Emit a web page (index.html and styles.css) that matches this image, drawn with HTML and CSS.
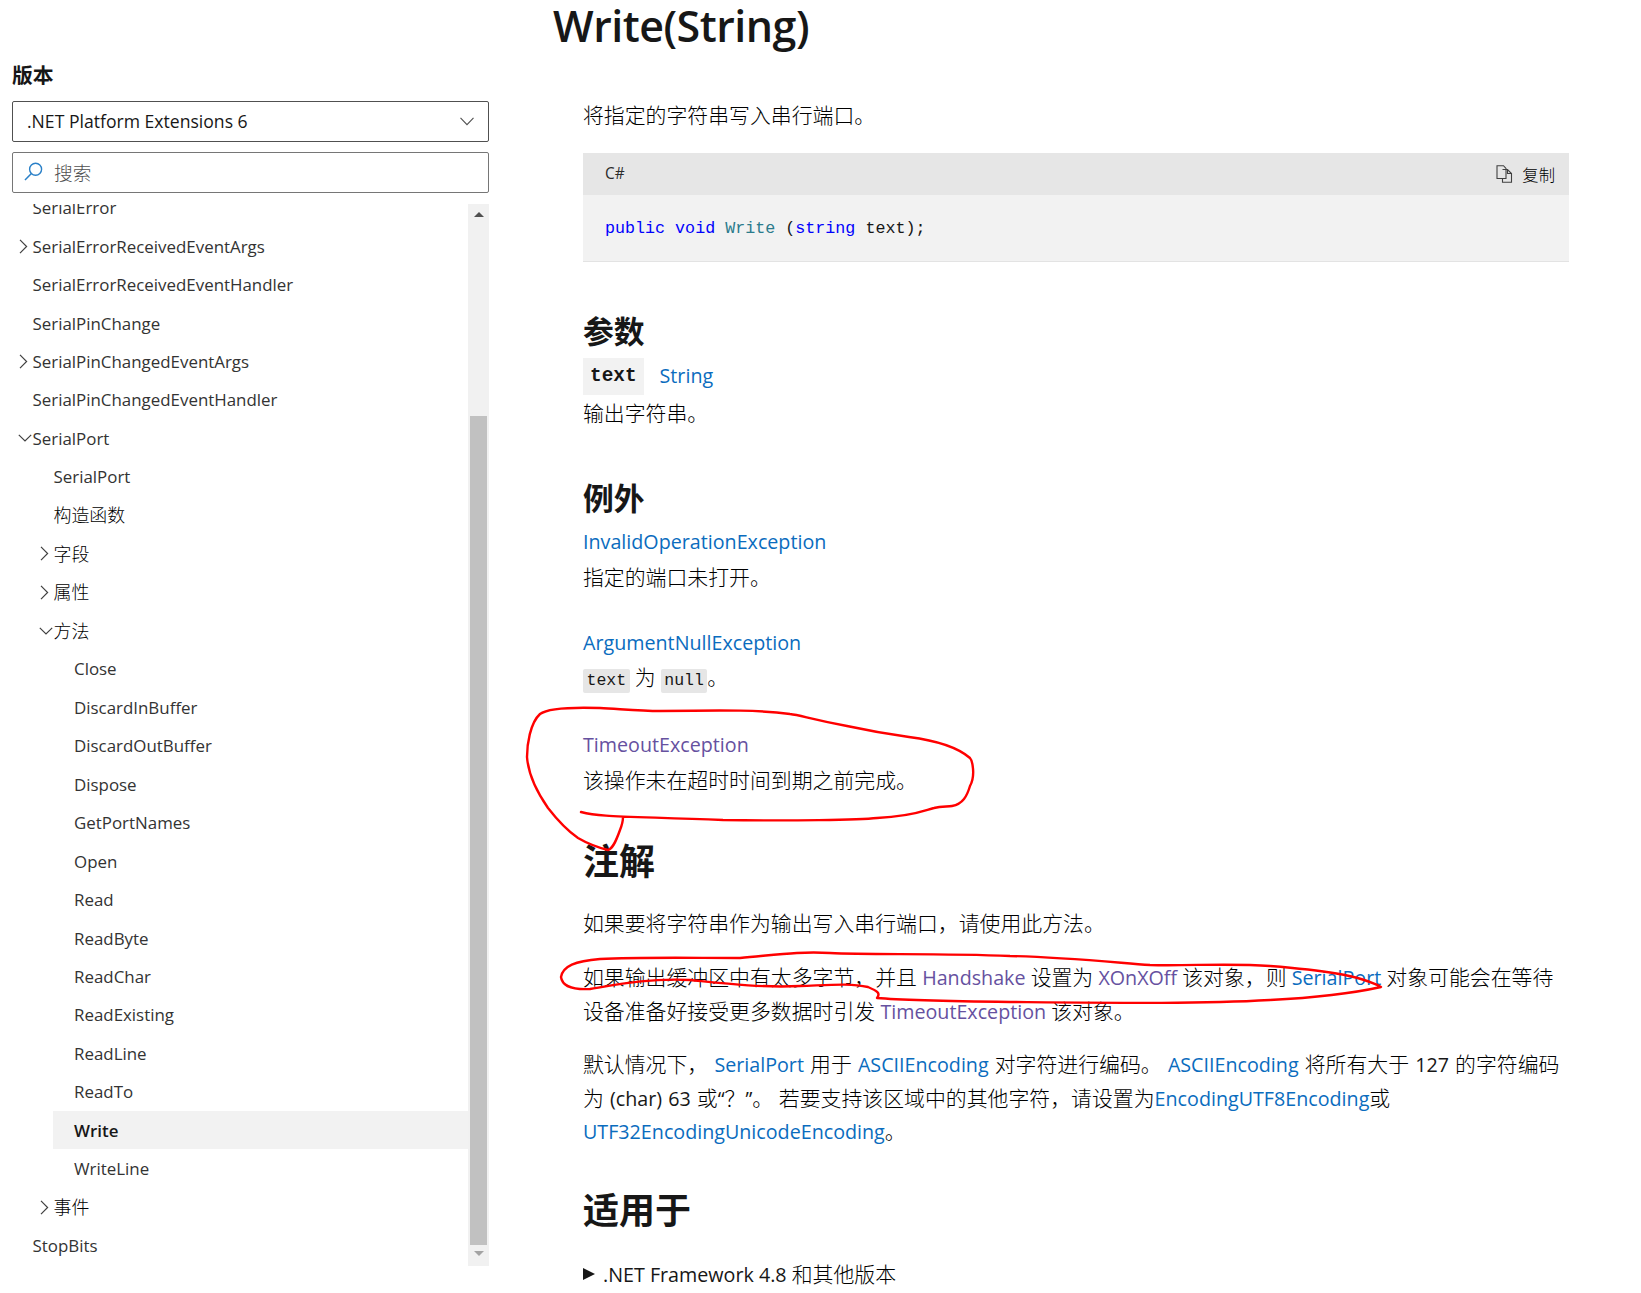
FILE: index.html
```html
<!DOCTYPE html>
<html lang="zh-CN">
<head>
<meta charset="utf-8">
<title>Write(String)</title>
<link rel="stylesheet" href="styles.css">
</head>
<body>
<div class="page">
  <aside class="side">
    <div class="side-label">版本</div>
    <div class="select">
      <span>.NET Platform Extensions 6</span>
      <svg class="select-chev" width="14" height="9" viewBox="0 0 14 9"><path d="M0.5 0.8 L7 7.6 L13.5 0.8" fill="none" stroke="#505050" stroke-width="1.1"/></svg>
    </div>
    <div class="search">
      <svg class="search-icon" width="19" height="19" viewBox="0 0 19 19"><circle cx="11.6" cy="7.2" r="6" fill="none" stroke="#2a80c8" stroke-width="1.4"/><path d="M7.4 11.4 L1 18" fill="none" stroke="#2a80c8" stroke-width="1.5"/></svg>
      <span class="zh">搜索</span>
    </div>
    <div class="tree">
      <ul class="tree-list">
        <li class="row l0"><i class="slot"></i>SerialError</li>
        <li class="row l0"><i class="slot"><svg width="9" height="15" viewBox="0 0 9 15"><path d="M1 0.8 L7.6 7.5 L1 14.2" fill="none" stroke="#404040" stroke-width="1.2"/></svg></i>SerialErrorReceivedEventArgs</li>
        <li class="row l0"><i class="slot"></i>SerialErrorReceivedEventHandler</li>
        <li class="row l0"><i class="slot"></i>SerialPinChange</li>
        <li class="row l0"><i class="slot"><svg width="9" height="15" viewBox="0 0 9 15"><path d="M1 0.8 L7.6 7.5 L1 14.2" fill="none" stroke="#404040" stroke-width="1.2"/></svg></i>SerialPinChangedEventArgs</li>
        <li class="row l0"><i class="slot"></i>SerialPinChangedEventHandler</li>
        <li class="row l0"><i class="slot"><svg class="open" width="14" height="8" viewBox="0 0 14 8"><path d="M0.8 0.8 L7 7 L13.2 0.8" fill="none" stroke="#404040" stroke-width="1.2"/></svg></i>SerialPort</li>
        <li class="row l1"><i class="slot"></i>SerialPort</li>
        <li class="row l1"><i class="slot"></i><span class="zh">构造函数</span></li>
        <li class="row l1"><i class="slot"><svg width="9" height="15" viewBox="0 0 9 15"><path d="M1 0.8 L7.6 7.5 L1 14.2" fill="none" stroke="#404040" stroke-width="1.2"/></svg></i><span class="zh">字段</span></li>
        <li class="row l1"><i class="slot"><svg width="9" height="15" viewBox="0 0 9 15"><path d="M1 0.8 L7.6 7.5 L1 14.2" fill="none" stroke="#404040" stroke-width="1.2"/></svg></i><span class="zh">属性</span></li>
        <li class="row l1"><i class="slot"><svg class="open" width="14" height="8" viewBox="0 0 14 8"><path d="M0.8 0.8 L7 7 L13.2 0.8" fill="none" stroke="#404040" stroke-width="1.2"/></svg></i><span class="zh">方法</span></li>
        <li class="row l2">Close</li>
        <li class="row l2">DiscardInBuffer</li>
        <li class="row l2">DiscardOutBuffer</li>
        <li class="row l2">Dispose</li>
        <li class="row l2">GetPortNames</li>
        <li class="row l2">Open</li>
        <li class="row l2">Read</li>
        <li class="row l2">ReadByte</li>
        <li class="row l2">ReadChar</li>
        <li class="row l2">ReadExisting</li>
        <li class="row l2">ReadLine</li>
        <li class="row l2">ReadTo</li>
        <li class="row l2 current">Write</li>
        <li class="row l2">WriteLine</li>
        <li class="row l1"><i class="slot"><svg width="9" height="15" viewBox="0 0 9 15"><path d="M1 0.8 L7.6 7.5 L1 14.2" fill="none" stroke="#404040" stroke-width="1.2"/></svg></i><span class="zh">事件</span></li>
        <li class="row l0"><i class="slot"></i>StopBits</li>
      </ul>
      <div class="scrollbar">
        <div class="arrow-up"></div>
        <div class="thumb"></div>
        <div class="arrow-down"></div>
      </div>
    </div>
  </aside>
  <main class="main">
    <h1 class="title">Write(String)</h1>
    <div class="content">
      <p class="lead zh">将指定的字符串写入串行端口。</p>
      <div class="code">
        <div class="code-head">
          <span class="lang">C#</span>
          <span class="copy">
            <svg width="17" height="18" viewBox="0 0 17 18"><path d="M1 0.7 H7.5 L10 3.5 V13.5 H1 Z M6.5 4.5 H11.5 L15.5 8.5 V17.3 H6.5 V13.5 M11.5 4.5 V8.5 H15.5" fill="none" stroke="#404040" stroke-width="1.1"/></svg>
            <span class="zh">复制</span>
          </span>
        </div>
        <pre class="code-body"><span class="kw">public</span> <span class="kw">void</span> <span class="fn">Write</span> (<span class="kw">string</span> text);</pre>
      </div>

      <h2 class="h-params">参数</h2>
      <div class="param"><code class="param-name">text</code><a class="link">String</a></div>
      <p class="desc zh">输出字符串。</p>

      <h2 class="h-exc">例外</h2>
      <a class="link block">InvalidOperationException</a>
      <p class="desc zh">指定的端口未打开。</p>
      <a class="link block exc2">ArgumentNullException</a>
      <p class="desc"><code class="chip">text</code> <span class="zh">为</span> <code class="chip">null</code><span class="zh">。</span></p>
      <a class="link visited block exc3">TimeoutException</a>
      <p class="desc zh">该操作未在超时时间到期之前完成。</p>

      <h2 class="h-rem big">注解</h2>
      <p class="rem1 zh">如果要将字符串作为输出写入串行端口，请使用此方法。</p>
      <p class="rem2"><span class="zh">如果输出缓冲区中有太多字节，并且</span> <a class="link visited">Handshake</a> <span class="zh">设置为</span> <a class="link visited">XOnXOff</a> <span class="zh">该对象，则</span> <a class="link">SerialPort</a> <span class="zh">对象可能会在等待</span><br><span class="zh">设备准备好接受更多数据时引发</span> <a class="link visited">TimeoutException</a> <span class="zh">该对象。</span></p>
      <p class="rem3"><span class="zh">默认情况下，</span> <a class="link">SerialPort</a> <span class="zh">用于</span> <a class="link">ASCIIEncoding</a> <span class="zh">对字符进行编码。</span> <a class="link">ASCIIEncoding</a> <span class="zh">将所有大于</span> 127 <span class="zh">的字符编码</span><br><span class="zh">为</span> (char) 63 <span class="zh">或</span>“<span class="zh">？</span>”<span class="zh">。 若要支持该区域中的其他字符，请设置为</span><a class="link">EncodingUTF8Encoding</a><span class="zh">或</span><br><a class="link">UTF32EncodingUnicodeEncoding</a><span class="zh">。</span></p>

      <h2 class="h-app big">适用于</h2>
      <div class="details"><span class="tri"></span><span>.NET Framework 4.8 <span class="zh">和其他版本</span></span></div>
    </div>
  </main>
  <svg class="ink" width="1641" height="1293" viewBox="0 0 1641 1293">
    <path class="stroke" d="M581 812 C600 817 620 816 723 820 C790 821 860 820 877 818 C915 816 925 810 934 808 C942 806 948 807 952 806 C963 804 967 796 970 786 C976 775 972 760 970 758 C955 745 932 740 909 737 C880 733 870 731 847 726 C810 719 800 715 790 714 C760 710 730 710 660 711 C640 711 620 709 600 708 C570 707 548 708 540 714 C530 723 527 745 527 757 C528 770 532 785 548 808 C555 817 565 829 578 838 C590 845 600 848 608 850 C612 849 615 844 620 830 C622 825 623 822 623 817"/>
    <path class="stroke" d="M561 977 C563 966 575 961 600 959 C640 957 690 958 740 958 C775 955 800 951 830 953 C870 955 940 953 1010 956 C1060 957 1110 962 1150 965 C1190 966 1230 963 1270 966 C1320 970 1360 975 1381 987 C1345 995 1310 998 1270 1000 C1200 1004 1120 1003 1010 1002 C940 1001 900 1000 877 998 C881 993 877 991 868 987 C850 983 830 985 800 986 C760 988 720 983 690 980 C650 978 620 984 590 989 C570 990 562 985 561 977"/>
  </svg>
</div>
</body>
</html>
```
FILE: styles.css
```css
* { box-sizing: border-box; }
html, body { margin: 0; padding: 0; background: #fff; }
body {
  font-family: "Open Sans", "Noto Sans CJK SC", sans-serif;
  color: #171717;
}
.zh {
  font-family: "Noto Sans CJK SC", sans-serif;
  font-size: 1.06em;
  font-weight: 300;
  color: #000;
}
.page {
  position: relative;
  display: flex;
  width: 1641px;
  height: 1293px;
  overflow: hidden;
}
.side {
  width: 477px;
  margin-left: 12px;
  flex: none;
}
.side-label {
  margin-top: 62px;
  height: 26px;
  line-height: 26px;
  font-size: 20.8px;
  font-weight: 700;
}
.select, .search {
  display: flex;
  align-items: center;
  height: 41px;
  border: 1px solid #505050;
  border-radius: 2px;
  font-size: 17.6px;
}
.select {
  margin-top: 13px;
  padding: 0 14px 2px;
  justify-content: space-between;
}
.select-chev { margin-top: 2px; }
.search {
  margin-top: 10px;
  padding: 0 0 2px 11px;
  gap: 11px;
  color: #505050;
  border-color: #767676;
}
.search .zh { color: #505050; }
.tree {
  display: flex;
  margin-top: 11px;
  height: 1062px;
  overflow: hidden;
}
.tree-list {
  flex: 1;
  list-style: none;
  margin: -15.5px 0 0;
  padding: 0;
  font-size: 16.9px;
  color: #333;
}
.row {
  display: flex;
  align-items: center;
  height: 38.44px;
}
.row .zh { margin-top: -2px; }
.open { margin-left: -1px; }
.l0 { padding-left: 6.5px; }
.l1 { padding-left: 27.5px; }
.l2 { margin-left: 41px; padding-left: 21px; }
.slot {
  display: flex;
  align-items: center;
  justify-content: flex-start;
  width: 14px;
  height: 15px;
  flex: none;
}
.current { background: #f2f2f2; font-weight: 600; color: #171717; }
.scrollbar {
  display: flex;
  flex-direction: column;
  align-items: center;
  width: 21px;
  flex: none;
  background: #f1f1f1;
}
.arrow-up, .arrow-down {
  width: 0;
  height: 0;
  border-left: 5px solid transparent;
  border-right: 5px solid transparent;
}
.arrow-up { margin-top: 8px; border-bottom: 5px solid #505050; }
.arrow-down { margin-top: 6px; border-top: 5px solid #a3a3a3; }
.thumb {
  width: 17px;
  height: 829px;
  margin-top: 199px;
  background: #c1c1c1;
}
.main {
  width: 1016px;
  margin-left: 64px;
  flex: none;
}
.title {
  margin: -1px 0 0;
  height: 54px;
  line-height: 54px;
  font-size: 43px;
  font-weight: 600;
  letter-spacing: -0.5px;
}
.content {
  padding-left: 30px;
  font-size: 19.7px;
  line-height: 34.5px;
}
.content p { margin: 0; }
.content p.zh { line-height: 32.5px; }
p.lead { margin-top: 45px; padding-bottom: 2px; }
.code { margin-top: 20px; background: #f2f2f2; border-bottom: 1px solid #e3e3e3; height: 109px; }
.code-head {
  display: flex;
  align-items: center;
  justify-content: space-between;
  height: 42px;
  padding: 0 14px 0 22px;
  background: #e6e6e6;
  font-size: 15.4px;
  color: #2b2b2b;
}
.lang { font-size: 15.4px; margin-top: 2px; }
.copy { display: flex; align-items: center; gap: 9px; margin-top: 1px; }
.code-body {
  margin: 0;
  padding: 18px 22px 0;
  font-family: "Liberation Mono", "Noto Sans CJK SC", monospace;
  font-size: 16.7px;
  line-height: 32px;
  color: #171717;
}
.kw { color: #0101fd; }
.fn { color: #2b7b8c; }
h2 {
  margin: 0;
  font-size: 30.8px;
  line-height: 42px;
  font-weight: 700;
}
h2.big { font-size: 36px; }
.h-params { margin-top: 48px; }
.param { display: flex; align-items: center; height: 37px; margin-top: 6px; }
.param-name {
  display: flex;
  align-items: center;
  height: 37px;
  padding: 0 7px;
  margin-right: 16px;
  background: #f2f2f2;
  font-family: "Liberation Mono", monospace;
  font-size: 19.4px;
  font-weight: 700;
}
.desc { height: 35px; }
.param + .desc { margin-top: 1px; }
.h-exc { margin-top: 46px; }
.block { display: block; margin-top: 6px; height: 35px; }
.link { color: #0a6cbe; }
.visited { color: #66519f; }
.exc2 { margin-top: 31px; height: 33px; }
.exc3 { margin-top: 34px; }
.chip {
  display: inline-block;
  padding: 0 3.5px;
  line-height: 24px;
  background: #e6e6e6;
  border-radius: 2px;
  font-family: "Liberation Mono", monospace;
  font-size: 16.5px;
}
.h-rem { margin-top: 43px; }
p.rem1 { margin-top: 23px; padding-bottom: 2px; }
p.rem2, p.rem3 { width: 986px; line-height: 33.5px; }
p.rem2 .zh, p.rem3 .zh { line-height: 0; }
p.rem2 { margin-top: 21px; }
p.rem3 { margin-top: 20px; word-spacing: 1px; }
.h-app { margin-top: 41px; }
.details { display: flex; align-items: center; margin-top: 24px; gap: 8px; }
.tri {
  width: 0;
  height: 0;
  border-top: 6px solid transparent;
  border-bottom: 6px solid transparent;
  border-left: 12px solid #171717;
}
.ink {
  position: absolute;
  left: 0;
  top: 0;
  pointer-events: none;
}
.stroke {
  fill: none;
  stroke: #f00;
  stroke-width: 2.4;
  stroke-linecap: round;
  stroke-linejoin: round;
}
```
